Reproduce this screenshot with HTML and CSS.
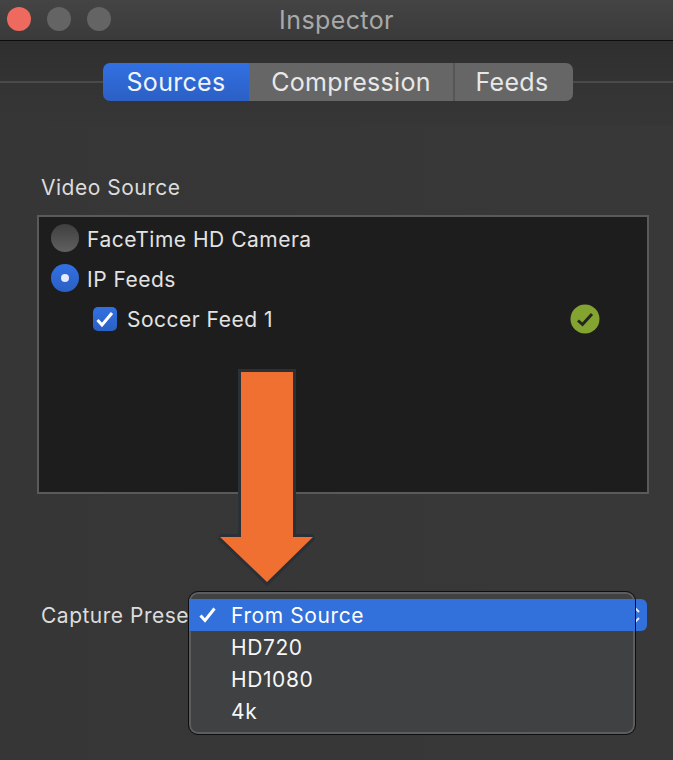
FILE: index.html
```html
<!DOCTYPE html>
<html lang="en">
<head>
    <meta charset="UTF-8">
    <title>Inspector</title>
    <link rel="stylesheet" href="styles.css">
</head>
<body>
    <div class="window">
        <div class="titlebar">
            <div class="lights">
                <span class="light red"></span>
                <span class="light"></span>
                <span class="light"></span>
            </div>
            <div class="title">Inspector</div>
        </div>

        <div class="tabs-row">
            <div class="tabs">
                <div class="tab tab-sources active">Sources</div>
                <div class="tab tab-compression">Compression</div>
                <div class="tab tab-feeds">Feeds</div>
            </div>
        </div>

        <div class="content">
            <div class="section-label">Video Source</div>
            <div class="source-list">
                <div class="source-row">
                    <span class="radio"></span>
                    <span class="row-text">FaceTime HD Camera</span>
                </div>
                <div class="source-row">
                    <span class="radio checked"></span>
                    <span class="row-text">IP Feeds</span>
                </div>
                <div class="source-row feed-row">
                    <span class="checkbox">
                        <svg width="24" height="24" viewBox="0 0 24 24"><path d="M4.500 13l4.500 5L19 6" fill="none" stroke="#fff" stroke-width="3"/></svg>
                    </span>
                    <span class="feed-name">Soccer Feed 1</span>
                    <svg class="status-ok" width="30" height="30" viewBox="0 0 30 30">
                        <circle cx="15" cy="15" r="14.500" fill="#84a431"/>
                        <path d="M8 16.500l4.500 4L22 10" fill="none" stroke="#23261e" stroke-width="3"/>
                    </svg>
                </div>
            </div>

            <div class="preset-row">
                <div class="section-label preset-label">Capture Preset:</div>
                <div class="preset-select">
                    <svg class="chevrons" width="12" height="24" viewBox="0 0 12 24"><path d="M2 9l4-4 4 4M2 15l4 4 4-4" fill="none" stroke="#dfe7f7" stroke-width="2"/></svg>
                </div>
            </div>
        </div>

        <svg class="arrow" width="104" height="226" viewBox="0 0 104 226">
            <path d="M25 6h52v165h20l-46 45-47-45h21z" fill="#ef7030" stroke="#2b3036" stroke-width="6" stroke-miterlimit="2" paint-order="stroke"/>
        </svg>

        <div class="menu">
            <div class="menu-item selected">
                <svg class="tick" width="18" height="18" viewBox="0 0 18 18"><path d="M1.500 9.500l4.500 5L15.500 2.500" fill="none" stroke="#fff" stroke-width="3"/></svg>
                From Source
            </div>
            <div class="menu-item">HD720</div>
            <div class="menu-item">HD1080</div>
            <div class="menu-item">4k</div>
        </div>
    </div>
</body>
</html>
```

FILE: styles.css
```css
body {
    margin: 0;
    background-color: #363636;
    font-family: Inter, 'Noto Sans', sans-serif;
    color: #e2e2e2;
}

.window {
    position: relative;
    width: 673px;
    height: 760px;
    overflow: hidden;
    background: linear-gradient(to right, #363636, #383838);
}

.titlebar {
    position: relative;
    height: 40px;
    display: flex;
    align-items: center;
    justify-content: center;
    background: linear-gradient(to bottom, #444444, #3a3a3a);
    border-bottom: 1px solid #0c0c0c;
}

.lights {
    position: absolute;
    left: 7px;
    top: 7px;
    display: flex;
    gap: 16px;
}

.light {
    width: 24px;
    height: 24px;
    border-radius: 50%;
    background-color: #646464;
}

.light.red {
    background-color: #ee6a5f;
}

.title {
    font-size: 25px;
    letter-spacing: 0.4px;
    color: #a9a9a9;
}

/* Pestañas */
.tabs-row {
    height: 84px;
    padding-top: 22px;
    box-sizing: border-box;
    background: linear-gradient(to bottom, #2f2f2f, #343434 60%, #363636);
    display: flex;
    justify-content: center;
    position: relative;
}

.tabs-row::before {
    content: "";
    position: absolute;
    left: 0;
    right: 0;
    top: 40px;
    height: 2px;
    background-color: #4a4a4a;
}

.tabs {
    position: relative;
    display: flex;
    height: 38px;
    margin-left: 3px;
    border-radius: 7px;
    overflow: hidden;
    font-size: 25px;
    letter-spacing: 0.3px;
}

.tab {
    display: flex;
    align-items: center;
    justify-content: center;
    box-sizing: border-box;
    background-color: #666666;
    color: #e8e8e8;
}

.tab.active {
    background: linear-gradient(to bottom, #3270e2, #2b60c4);
    color: #f0f4fc;
}

.tab-sources {
    width: 146px;
}

.tab-compression {
    width: 206px;
    border-right: 2px solid #565656;
}

.tab-feeds {
    width: 118px;
    padding-right: 4px;
}

.content {
    padding: 50px 24px 0 37px;
}

.section-label {
    font-size: 21px;
    line-height: 26px;
    letter-spacing: 0.5px;
    padding-left: 4px;
    color: #dcdcdc;
}

.source-list {
    height: 279px;
    box-sizing: border-box;
    margin-top: 14px;
    padding-top: 1px;
    background-color: #1d1d1d;
    border: 2px solid #5a5a5a;
}

.source-row {
    display: flex;
    align-items: center;
    gap: 8px;
    height: 40px;
    padding-left: 12px;
    font-size: 21px;
    letter-spacing: 0.5px;
}

.row-text {
    padding-top: 2px;
}

.radio {
    width: 28px;
    height: 28px;
    border-radius: 50%;
    background: linear-gradient(to bottom, #3f3f3f, #606060);
}

.radio.checked {
    display: flex;
    align-items: center;
    justify-content: center;
    background: linear-gradient(to bottom, #3270e2, #2b60c4);
}

.radio.checked::after {
    content: "";
    width: 8px;
    height: 8px;
    border-radius: 50%;
    background-color: #e4ebfa;
}

.feed-row {
    margin-top: 1px;
    padding-left: 54px;
    gap: 10px;
}

.checkbox {
    width: 24px;
    height: 24px;
    border-radius: 5px;
    background: linear-gradient(to bottom, #3270e2, #2b60c4);
}

.checkbox svg {
    display: block;
}

.feed-name {
    flex: 1;
}

.status-ok {
    margin-right: 47px;
}

.preset-row {
    display: flex;
    align-items: center;
    margin-top: 105px;
    height: 32px;
}

.preset-label {
    width: 148px;
    padding-top: 2px;
    white-space: nowrap;
}

.preset-select {
    flex: 1;
    height: 32px;
    margin-right: 2px;
    display: flex;
    align-items: center;
    justify-content: flex-end;
    padding-right: 6px;
    border-radius: 6px;
    background-color: #3270dc;
}

/* Flecha encima de la lista */
.arrow {
    position: absolute;
    left: 216px;
    top: 366px;
}

/* Menú desplegable abierto */
.menu {
    position: absolute;
    left: 188px;
    top: 591px;
    width: 448px;
    height: 144px;
    box-sizing: border-box;
    padding-top: 7px;
    border: 1px solid #0e0e0e;
    border-radius: 10px;
    background-color: #404142;
    box-shadow: inset 0 0 0 2px #5c5d5e;
    overflow: hidden;
    font-size: 21px;
    letter-spacing: 0.6px;
    color: #f6f6f6;
}

.menu-item {
    position: relative;
    height: 32px;
    line-height: 34px;
    padding-left: 42px;
}

.menu-item.selected {
    background-color: #3270dc;
    color: #fff;
}

.tick {
    position: absolute;
    left: 10px;
    top: 7px;
}
```
